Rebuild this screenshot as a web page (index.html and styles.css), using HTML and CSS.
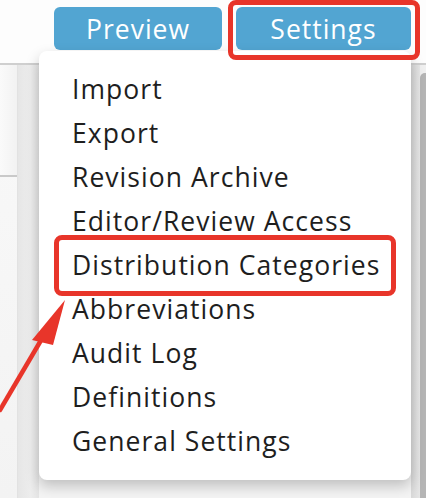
FILE: index.html
```html
<!DOCTYPE html>
<html>
<head>
<meta charset="utf-8">
<link rel="stylesheet" href="styles.css">
</head>
<body>
<div class="page">
  <header class="topbar">
    <button class="btn btn-preview">Preview</button>
    <button class="btn btn-settings">Settings</button>
  </header>
  <main class="workspace">
    <div class="side-panel">
      <div class="side-head"></div>
    </div>
    <div class="side-strip"></div>
    <div class="center"></div>
    <div class="right-strip"></div>
    <div class="right-edge"></div>
  </main>

  <nav class="menu">
    <a class="menu-item">Import</a>
    <a class="menu-item">Export</a>
    <a class="menu-item">Revision Archive</a>
    <a class="menu-item">Editor/Review Access</a>
    <a class="menu-item">Distribution Categories</a>
    <a class="menu-item">Abbreviations</a>
    <a class="menu-item">Audit Log</a>
    <a class="menu-item">Definitions</a>
    <a class="menu-item">General Settings</a>
  </nav>

  <div class="mark mark-settings"></div>
  <div class="mark mark-item"></div>
  <svg class="arrow" width="80" height="130" viewBox="0 0 80 130">
    <line x1="0" y1="125" x2="50" y2="40" stroke="#e8352a" stroke-width="4.5" stroke-linecap="round"/>
    <polygon points="65,15 32,55 53,60" fill="#e8352a"/>
  </svg>
</div>
</body>
</html>
```

FILE: styles.css
```css
* { box-sizing: border-box; }
html, body { margin: 0; padding: 0; }
body {
  width: 426px;
  height: 498px;
  overflow: hidden;
  font-family: "Open Sans", "Liberation Sans", sans-serif;
  background: #ececec;
}
.page {
  position: relative;
  width: 426px;
  height: 498px;
  display: flex;
  flex-direction: column;
}
.topbar {
  height: 65px;
  flex: none;
  background: #fdfdfd;
  border-bottom: 2px solid #cfcfcf;
  display: flex;
  align-items: flex-start;
  justify-content: flex-end;
  padding: 7px 15px 0 0;
  gap: 14px;
}
.btn {
  height: 43px;
  border: none;
  border-radius: 6px;
  background: #52a5d2;
  color: #fff;
  font-family: inherit;
  font-size: 26.5px;
  letter-spacing: 1px;
  font-weight: 400;
  padding: 0;
}
.btn-preview { width: 168px; }
.btn-settings { width: 175px; }
.workspace {
  flex: 1;
  display: flex;
  background: #f0f0f0;
}
.side-panel {
  width: 18px;
  background: linear-gradient(to bottom, #f9f9f9, #f3f3f3);
  border-right: 1px solid #e2e2e2;
}
.side-head {
  height: 112px;
  border-bottom: 2px solid #c9c9c9;
  background: linear-gradient(to right, #fafafa, #f2f2f2);
}
.side-strip {
  width: 21px;
  background: linear-gradient(to right, #e6e6e6, #ededed 60%, #e4e4e4);
}
.center {
  flex: 1;
  background: #f4f4f4;
}
.right-strip {
  width: 9px;
  background: linear-gradient(to right, #d8d8d8, #e6e6e6);
}
.right-edge {
  width: 6px;
  margin-top: 8px;
  background: #b5b5b5;
  border-top-left-radius: 5px;
}
.menu {
  position: absolute;
  left: 39px;
  top: 51px;
  width: 372px;
  height: 429px;
  background: #fff;
  border-radius: 8px;
  box-shadow: 0 6px 14px rgba(0,0,0,0.22);
  padding: 16px 0 0 33px;
  display: flex;
  flex-direction: column;
}
.menu-item {
  height: 44px;
  line-height: 44px;
  font-size: 26.5px;
  letter-spacing: 1.05px;
  font-weight: 380;
  color: #1e1e1e;
  white-space: nowrap;
}
.mark {
  position: absolute;
  border: 5px solid #e8352a;
  border-radius: 8px;
}
.mark-settings {
  left: 228px;
  top: 0px;
  width: 192px;
  height: 60px;
}
.mark-item {
  left: 54px;
  top: 235px;
  width: 342px;
  height: 61px;
}
.arrow {
  position: absolute;
  left: 0;
  top: 285px;
}
```
